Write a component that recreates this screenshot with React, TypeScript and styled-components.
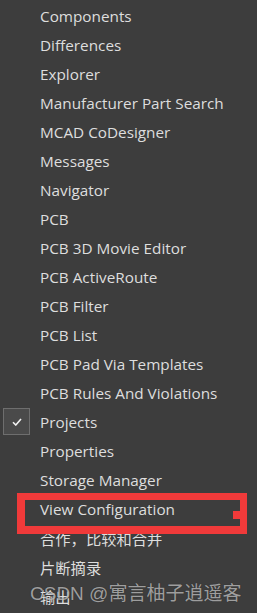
import React from "react";
import styled, { createGlobalStyle } from "styled-components";

const Global = createGlobalStyle`
  html, body { margin: 0; padding: 0; background: #3d3d3d; }
  #root { width: 257px; height: 613px; overflow: hidden; }
`;

const Menu = styled.div`
  position: relative;
  width: 257px;
  height: 613px;
  background: #3d3d3d;
  padding-top: 1px;
  box-sizing: border-box;
  font-family: "Open Sans", "Noto Sans CJK SC", sans-serif;
  overflow: hidden;
`;

const Row = styled.div`
  display: flex;
  align-items: center;
  height: 29px;
  padding-left: 3px;
  gap: 10px;
`;

const Check = styled.div<{ $on?: boolean }>`
  width: 27px;
  height: 27px;
  flex: none;
  box-sizing: border-box;
  display: flex;
  align-items: center;
  justify-content: center;
  border: 1px solid ${(p) => (p.$on ? "#6e6e6e" : "transparent")};
  background: ${(p) => (p.$on ? "#4a4a4a" : "transparent")};
`;

const Label = styled.span`
  color: #dedede;
  font-size: 15.3px;
  white-space: nowrap;
`;

const Annotation = styled.div`
  position: absolute;
  left: 17px;
  top: 493px;
  width: 230px;
  height: 41px;
  box-sizing: border-box;
  border: 7px solid #f03a3a;
  border-bottom-width: 8px;
  border-left-width: 8px;
`;

const Notch = styled.div`
  position: absolute;
  right: 0;
  top: 11px;
  width: 7px;
  height: 8px;
  background: #f03a3a;
`;

const Watermark = styled.div`
  position: absolute;
  left: 30px;
  top: 581px;
  font-family: "Liberation Sans", "Noto Sans CJK SC", sans-serif;
  font-size: 19px;
  line-height: 26px;
  color: rgba(205, 205, 205, 0.72);
  text-shadow: 0 0 1px rgba(0, 0, 0, 0.4);
  white-space: nowrap;
`;

const items = [
  "Components",
  "Differences",
  "Explorer",
  "Manufacturer Part Search",
  "MCAD CoDesigner",
  "Messages",
  "Navigator",
  "PCB",
  "PCB 3D Movie Editor",
  "PCB ActiveRoute",
  "PCB Filter",
  "PCB List",
  "PCB Pad Via Templates",
  "PCB Rules And Violations",
  "Projects",
  "Properties",
  "Storage Manager",
  "View Configuration",
  "合作，比较和合并",
  "片断摘录",
  "输出",
];

export default function App() {
  return (
    <>
      <Global />
      <Menu>
        {items.map((t) => {
          const on = t === "Projects";
          return (
            <Row key={t}>
              <Check $on={on}>
                {on && (
                  <svg width="10" height="8" viewBox="0 0 10 8">
                    <path d="M1 4.2 L3.8 7 L9 1" fill="none" stroke="#f2f2f2" strokeWidth="1.6" />
                  </svg>
                )}
              </Check>
              <Label>{t}</Label>
            </Row>
          );
        })}
        <Annotation>
          <Notch />
        </Annotation>
        <Watermark>CSDN @寓言柚子逍遥客</Watermark>
      </Menu>
    </>
  );
}
